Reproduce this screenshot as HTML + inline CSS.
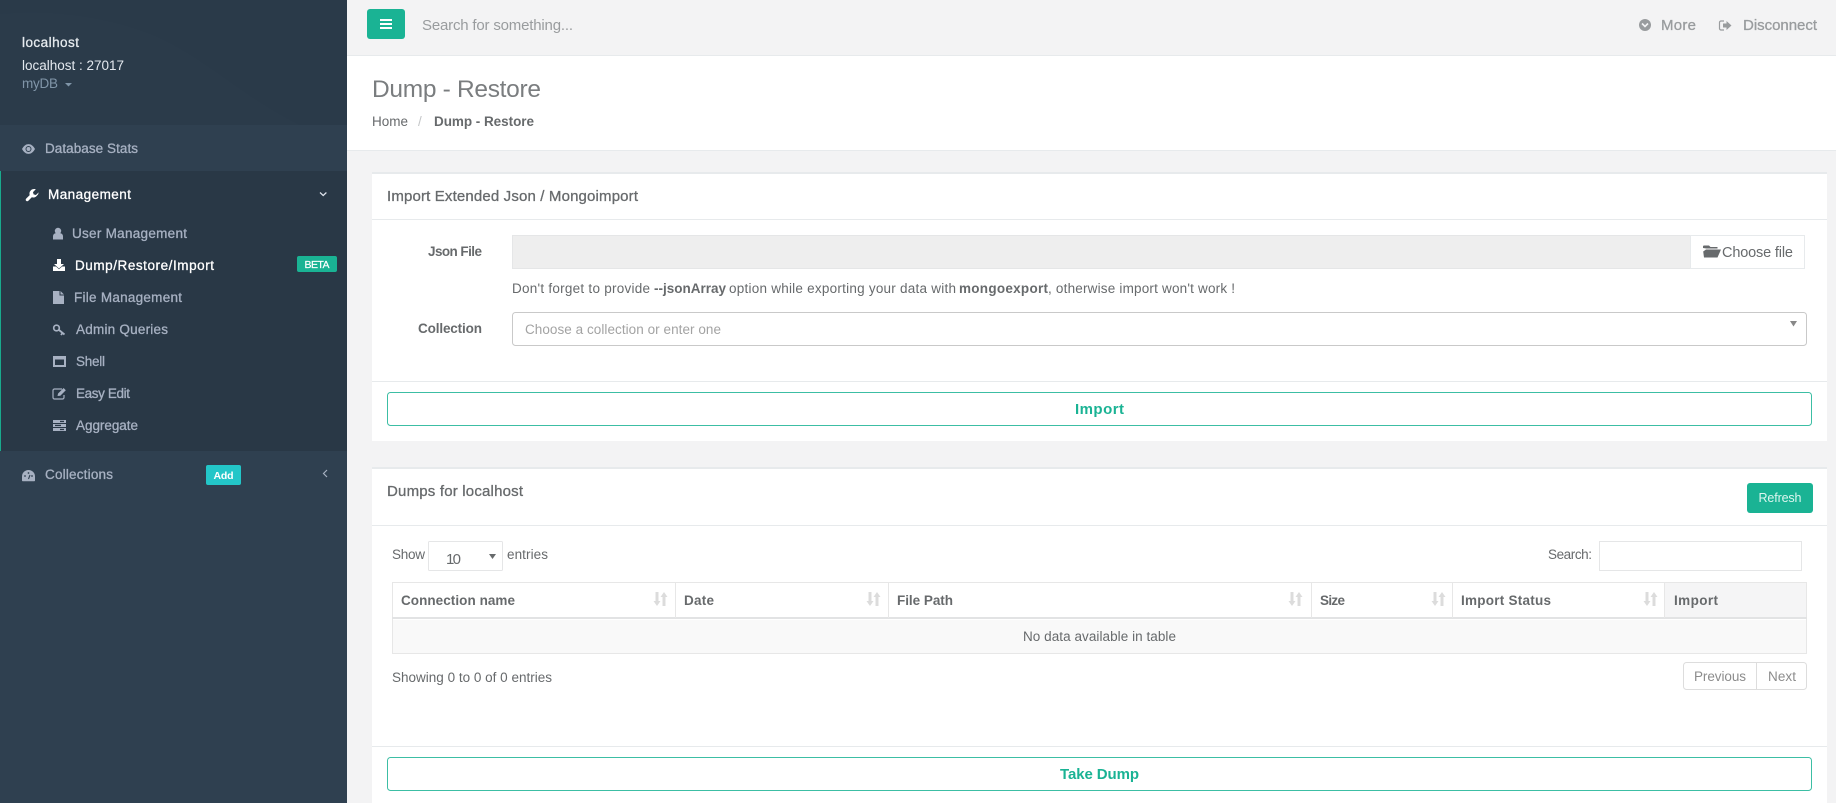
<!DOCTYPE html>
<html>
<head>
<meta charset="utf-8">
<style>
html,body{margin:0;padding:0;width:1836px;height:803px;overflow:hidden;background:#f3f3f4;}
svg{display:block;position:absolute;left:0;top:0;}
text{font-family:"Liberation Sans",sans-serif;font-size:13.5px;fill:#676a6c;}
.s{stroke:currentColor;stroke-width:.3px;}
.b{font-weight:bold;}
.nav{fill:#a7b1c2;color:#a7b1c2;stroke:#a7b1c2;stroke-width:.3px;}
.act{fill:#fff;color:#fff;stroke:#fff;stroke-width:.3px;}
.g6{fill:#676a6c;stroke:#676a6c;stroke-width:.3px;}
.top{fill:#999c9e;stroke:#999c9e;stroke-width:.3px;}
</style>
</head>
<body>
<svg width="1836" height="803" viewBox="0 0 1836 803" xmlns="http://www.w3.org/2000/svg">
  <!-- page -->
  <rect width="1836" height="803" fill="#f3f3f4"/>
  <!-- sidebar -->
  <rect width="347" height="803" fill="#2f4050"/>
  <rect width="347" height="125" fill="#2a3a49"/>
  <path d="M0 14C60 8 120 20 160 38C210 62 240 95 300 125H0Z" fill="#2c3c4b" opacity=".7"/>
  <rect x="0" y="171" width="347" height="280" fill="#293846"/>
  <rect x="0" y="171" width="1" height="280" fill="#19aa8d"/>

  <text x="22" y="47" textLength="57" class="act" style="fill:#e6ebef;stroke:#e6ebef">localhost</text>
  <text x="22" y="70" textLength="102" style="fill:#e3e8ee">localhost : 27017</text>
  <text x="22" y="88" textLength="36" style="fill:#8095a8">myDB</text>
  <path d="M65 83h7l-3.500 3.500z" fill="#8095a8"/>

  <!-- Database Stats -->
  <path d="M22 149c3.500-6.500 9.500-6.500 13 0c-3.500 6.500-9.500 6.500-13 0z" fill="#a7b1c2"/>
  <circle cx="28.500" cy="149" r="3" fill="#2f4050"/><circle cx="28.500" cy="149" r="2" fill="#a7b1c2"/>
  <text x="45" y="153" textLength="93" class="nav">Database Stats</text>

  <!-- Management -->
  <path transform="translate(1 0)" d="M37.800 192.300l-2.900 2.700-2.300-.6-.6-2.300 2.800-2.800c-2-.6-4-.1-5.200 1.300-1.200 1.300-1.400 3-.9 4.500l-3.300 3.300c-.9.9-.9 1.800-.3 2.400.7.700 1.600.6 2.400-.2l3.300-3.300c1.600.5 3.300.1 4.600-1.100 1.300-1.200 2.400-2.100 1.900-3.900z" fill="#fff"/>
  <text x="48" y="199" textLength="83" class="act">Management</text>
  <path d="M320 192.500l3.200 3 3.200-3" fill="none" stroke="#dfe4ed" stroke-width="1.200"/>

  <!-- User Management -->
  <circle cx="58" cy="231" r="3.200" fill="#a7b1c2"/>
  <path d="M53 239.500v-3c0-2.300 1.700-3.200 3-3.200h4c1.300 0 3 .9 3 3.200v3z" fill="#a7b1c2"/>
  <text x="72" y="238" textLength="115" class="nav">User Management</text>

  <!-- Dump -->
  <path d="M57 259h4v5h3l-5 4.500-5-4.500h3z" fill="#fff"/>
  <path d="M53 266.500h3l3 2.800 3-2.800h3v4.500H53z" fill="#fff"/>
  <text x="75" y="270" textLength="139" class="act">Dump/Restore/Import</text>
  <rect x="297" y="256" width="40" height="16" rx="2" fill="#1ab394"/>
  <text x="304.500" y="268" textLength="25" style="font-size:10.500px;fill:#fff;stroke:#fff;stroke-width:.2px">BETA</text>

  <!-- File Management -->
  <path d="M53 291h6.500v4.500H64V304H53z" fill="#a7b1c2"/><path d="M60.500 291l3.500 3.500h-3.500z" fill="#a7b1c2"/>
  <text x="74" y="302" textLength="108" class="nav">File Management</text>

  <!-- Admin Queries -->
  <circle cx="56.500" cy="328" r="2.800" fill="none" stroke="#a7b1c2" stroke-width="1.700"/>
  <path d="M59 330l5.500 4.500M62.500 333l-1.500 2" fill="none" stroke="#a7b1c2" stroke-width="1.800"/>
  <text x="76" y="334" textLength="92" class="nav">Admin Queries</text>

  <!-- Shell -->
  <rect x="53" y="356" width="13" height="11" fill="#a7b1c2"/><rect x="55" y="359.500" width="9" height="5.500" fill="#293846"/>
  <text x="76" y="366" textLength="29" class="nav">Shell</text>

  <!-- Easy Edit -->
  <path d="M62 389h-7.500a1.500 1.500 0 0 0-1.500 1.500v7a1.500 1.500 0 0 0 1.500 1.500h8a1.500 1.500 0 0 0 1.500-1.500v-2.500" fill="none" stroke="#a7b1c2" stroke-width="1.200"/>
  <path d="M57.500 396l.6-2.500 5.500-5.500 2.200 2.200-5.500 5.500z" fill="#a7b1c2"/>
  <text x="76" y="398" textLength="54" class="nav">Easy Edit</text>

  <!-- Aggregate -->
  <rect x="53" y="420" width="13" height="3" fill="#a7b1c2"/><rect x="53" y="424" width="13" height="3" fill="#a7b1c2"/><rect x="53" y="428" width="13" height="3" fill="#a7b1c2"/>
  <rect x="60" y="420.800" width="4" height="1.300" fill="#293846"/><rect x="55" y="424.800" width="6" height="1.300" fill="#293846"/><rect x="60" y="428.800" width="4" height="1.300" fill="#293846"/>
  <text x="76" y="430" textLength="62" class="nav">Aggregate</text>

  <!-- Collections -->
  <path d="M22 480.500v-4a6.500 6.500 0 0 1 13 0v4c0 .4-.3.700-.7.700H22.700c-.4 0-.7-.3-.7-.7z" fill="#a7b1c2"/>
  <circle cx="25" cy="476" r=".9" fill="#2f4050"/><circle cx="28.500" cy="473" r=".9" fill="#2f4050"/><circle cx="32" cy="476" r=".9" fill="#2f4050"/>
  <path d="M28.500 479l1.500-4" stroke="#2f4050" stroke-width="1.100"/>
  <text x="45" y="479" textLength="68" class="nav">Collections</text>
  <rect x="206" y="465" width="35" height="20" rx="2" fill="#23c6c8"/>
  <text x="213.500" y="479" textLength="20" class="b" style="font-size:10.500px;fill:#fff">Add</text>
  <path d="M327 470l-3.500 3.500 3.500 3.500" fill="none" stroke="#a7b1c2" stroke-width="1.200"/>

  <!-- top bar -->
  <rect x="347" y="0" width="1489" height="55" fill="#f3f3f4"/>
  <rect x="347" y="55" width="1489" height="1" fill="#e7eaec"/>
  <rect x="367" y="9" width="38" height="30" rx="3" fill="#1ab394"/>
  <rect x="380" y="19" width="12" height="2" fill="#fff"/><rect x="380" y="23" width="12" height="2" fill="#fff"/><rect x="380" y="27" width="12" height="2" fill="#fff"/>
  <text x="422" y="30" textLength="151" style="fill:#999c9e;font-size:15px">Search for something...</text>

  <circle cx="1645" cy="25" r="6" fill="#999c9e"/>
  <path d="M1642 23.500l3 3 3-3" fill="none" stroke="#f3f3f4" stroke-width="1.600"/>
  <text x="1661" y="30" textLength="35" class="top" style="font-size:15px">More</text>
  <path d="M1724 21h-3a1.500 1.500 0 0 0-1.500 1.500v6a1.500 1.500 0 0 0 1.500 1.500h3" fill="none" stroke="#999c9e" stroke-width="1.200"/>
  <path d="M1723 23.500h3.500V21l5 4.500-5 4.500v-2.500H1723z" fill="#999c9e"/>
  <text x="1743" y="30" textLength="74" class="top" style="font-size:15px">Disconnect</text>

  <!-- heading -->
  <rect x="347" y="56" width="1489" height="94" fill="#fff"/>
  <rect x="347" y="150" width="1489" height="1" fill="#e7eaec"/>
  <text x="372" y="97" textLength="169" style="font-size:24.500px;fill:#7a7d7f">Dump - Restore</text>
  <text x="372" y="126" textLength="36">Home</text>
  <text x="418" y="126" style="fill:#c4c6c8">/</text>
  <text x="434" y="126" textLength="100" class="b">Dump - Restore</text>

  <!-- card 1 -->
  <rect x="372" y="172" width="1455" height="269" fill="#fff"/>
  <rect x="372" y="172" width="1455" height="2" fill="#e7eaec"/>
  <rect x="372" y="219" width="1455" height="1" fill="#e7eaec"/>
  <text x="387" y="201" textLength="251" class="g6" style="font-size:15px">Import Extended Json / Mongoimport</text>

  <text x="428" y="256" textLength="54" class="b">Json File</text>
  <rect x="512.500" y="235.500" width="1178" height="33" fill="#eeeeee" stroke="#e5e6e7"/>
  <rect x="1690.500" y="235.500" width="114" height="33" fill="#fff" stroke="#e7eaec"/>
  <path d="M1703 248v-1.500a1 1 0 0 1 1-1h5l1.500 1.500h7v1.500h-11z" fill="#676a6c"/>
  <path d="M1706 249.500h15l-3.500 8H1704l-.8-6z" fill="#676a6c"/>
  <text x="1722" y="257" textLength="71" style="font-size:14.500px">Choose file</text>

  <text x="512" y="293" textLength="138">Don't forget to provide</text>
  <text x="654" y="293" textLength="72" class="b">--jsonArray</text>
  <text x="729" y="293" textLength="227">option while exporting your data with</text>
  <text x="959" y="293" textLength="89" class="b">mongoexport</text>
  <text x="1048" y="293" textLength="187">, otherwise import won't work !</text>

  <text x="418" y="333" textLength="64" class="b">Collection</text>
  <rect x="512.500" y="312.500" width="1294" height="33" rx="3" fill="#fff" stroke="#c9c9c9"/>
  <text x="525" y="334" textLength="196" style="fill:#a3a3a3">Choose a collection or enter one</text>
  <path d="M1790 321h7l-3.500 5.500z" fill="#888"/>

  <rect x="372" y="381" width="1455" height="1" fill="#e7eaec"/>
  <rect x="387.500" y="392.500" width="1424" height="33" rx="3" fill="#fff" stroke="#1ab394" stroke-opacity=".85"/>
  <text x="1075" y="414" textLength="49" class="b" style="font-size:15px;fill:#1ab394">Import</text>

  <!-- card 2 -->
  <rect x="372" y="467" width="1455" height="336" fill="#fff"/>
  <rect x="372" y="467" width="1455" height="2" fill="#e7eaec"/>
  <rect x="372" y="525" width="1455" height="1" fill="#e7eaec"/>
  <text x="387" y="496" textLength="136" class="g6" style="font-size:15px">Dumps for localhost</text>
  <rect x="1747" y="483" width="66" height="30" rx="3" fill="#1ab394"/>
  <text x="1758.500" y="502" textLength="43" style="font-size:12.500px;fill:#dcf6ef">Refresh</text>

  <text x="392" y="559" textLength="33">Show</text>
  <rect x="428.500" y="541.500" width="74" height="29" rx="1" fill="#fff" stroke="#e5e6e7"/>
  <text x="446" y="564" textLength="15" style="font-size:15px">10</text>
  <path d="M489 554h7l-3.500 5z" fill="#676a6c"/>
  <text x="507" y="559" textLength="41">entries</text>

  <text x="1548" y="559" textLength="44">Search:</text>
  <rect x="1599.500" y="541.500" width="202" height="29" fill="#fff" stroke="#e5e6e7"/>

  <!-- table -->
  <rect x="1665" y="582" width="142" height="36" fill="#f5f5f6"/>
  <rect x="393" y="620" width="1413" height="33" fill="#f9f9f9"/>
  <rect x="392.500" y="582.500" width="1414" height="71" fill="none" stroke="#e7e7e7"/>
  <rect x="392" y="617" width="1415" height="2" fill="#e2e3e4"/>
  <rect x="675" y="582" width="1" height="36" fill="#e7e7e7"/>
  <rect x="888" y="582" width="1" height="36" fill="#e7e7e7"/>
  <rect x="1311" y="582" width="1" height="36" fill="#e7e7e7"/>
  <rect x="1452" y="582" width="1" height="36" fill="#e7e7e7"/>
  <rect x="1664" y="582" width="1" height="36" fill="#e7e7e7"/>
  <text x="401" y="605" textLength="114" class="b">Connection name</text>
  <text x="684" y="605" textLength="30" class="b">Date</text>
  <text x="897" y="605" textLength="56" class="b">File Path</text>
  <text x="1320" y="605" textLength="25" class="b">Size</text>
  <text x="1461" y="605" textLength="90" class="b">Import Status</text>
  <text x="1674" y="605" textLength="44" class="b">Import</text>
  <g fill="#dcdcdc">
    <path d="M655.500 592h3v9h2l-3.500 5-3.500-5h2z"/><path d="M660.500 597l3.500-5 3.500 5h-2v9h-3v-9z"/>
    <path d="M868.500 592h3v9h2l-3.500 5-3.500-5h2z"/><path d="M873.500 597l3.500-5 3.500 5h-2v9h-3v-9z"/>
    <path d="M1290.500 592h3v9h2l-3.500 5-3.500-5h2z"/><path d="M1295.500 597l3.500-5 3.500 5h-2v9h-3v-9z"/>
    <path d="M1433.500 592h3v9h2l-3.500 5-3.500-5h2z"/><path d="M1438.500 597l3.500-5 3.500 5h-2v9h-3v-9z"/>
    <path d="M1645.500 592h3v9h2l-3.500 5-3.500-5h2z"/><path d="M1650.500 597l3.500-5 3.500 5h-2v9h-3v-9z"/>
  </g>
  <text x="1023" y="641" textLength="153">No data available in table</text>

  <text x="392" y="682" textLength="160">Showing 0 to 0 of 0 entries</text>
  <rect x="1683.500" y="662.500" width="123" height="27" rx="3" fill="#fff" stroke="#dddddd"/>
  <rect x="1756" y="663" width="1" height="26" fill="#dddddd"/>
  <text x="1694" y="681" textLength="52" style="fill:#8c8c8c">Previous</text>
  <text x="1768" y="681" textLength="28" style="fill:#8c8c8c">Next</text>

  <rect x="372" y="746" width="1455" height="1" fill="#e7eaec"/>
  <rect x="387.500" y="757.500" width="1424" height="33" rx="3" fill="#fff" stroke="#1ab394" stroke-opacity=".85"/>
  <text x="1060" y="779" textLength="79" class="b" style="font-size:15px;fill:#1ab394">Take Dump</text>
</svg>
</body>
</html>
